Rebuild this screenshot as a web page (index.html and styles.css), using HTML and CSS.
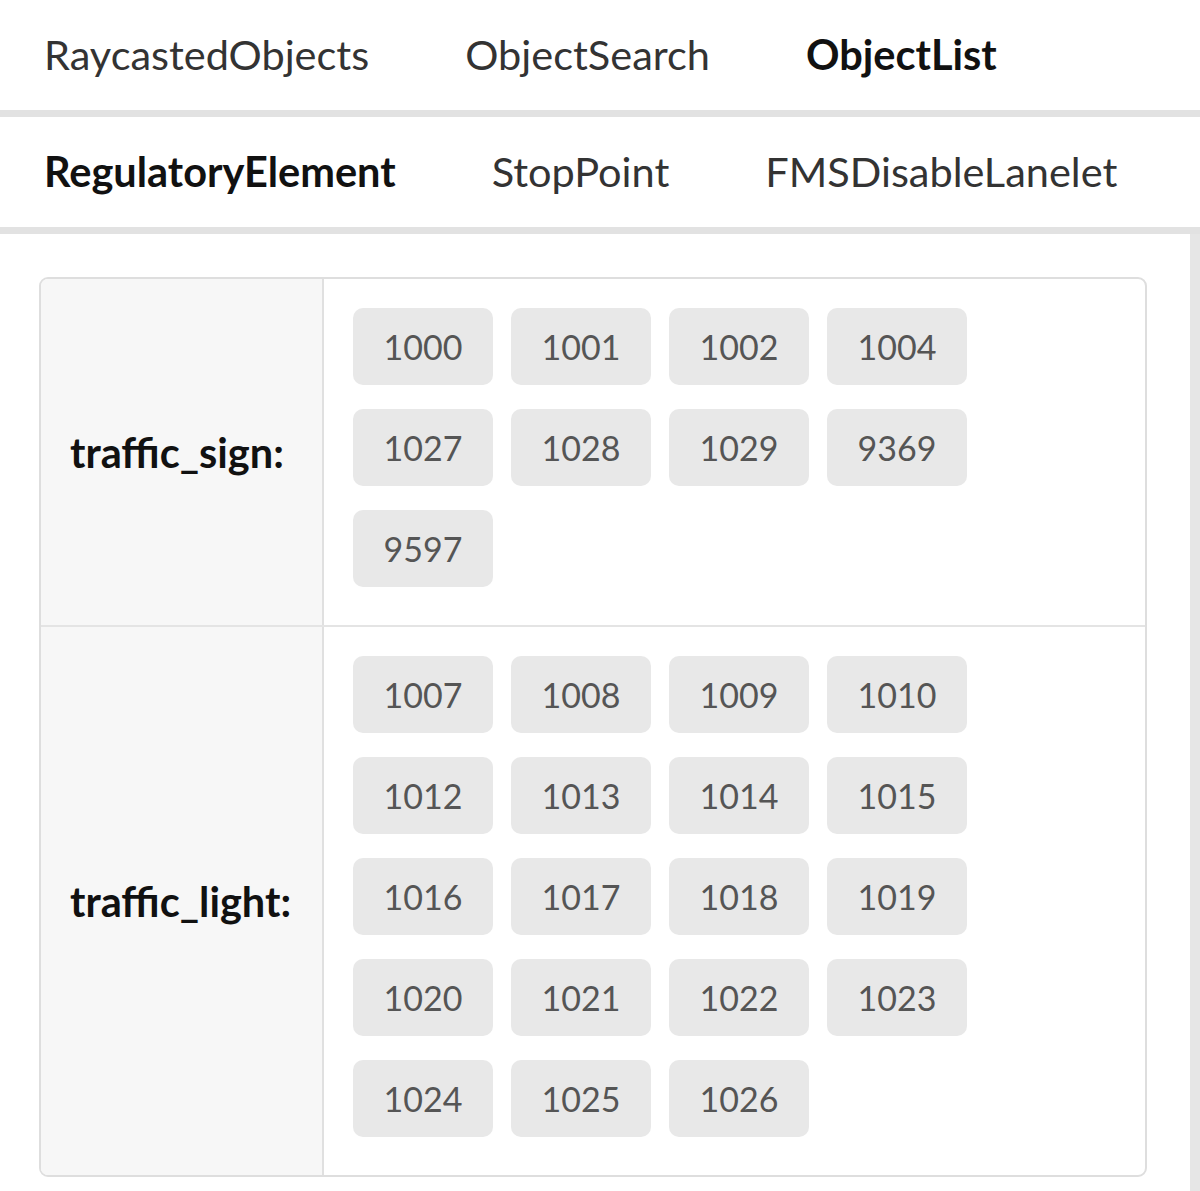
FILE: index.html
```html
<!DOCTYPE html>
<html lang="en">
<head>
    <meta charset="UTF-8">
    <meta name="viewport" content="width=device-width, initial-scale=1.0">
    <title>ObjectList</title>
    <link rel="stylesheet" href="styles.css">
</head>
<body>
    <div class="tabs">
        <div class="tab">RaycastedObjects</div>
        <div class="tab">ObjectSearch</div>
        <div class="tab active">ObjectList</div>
    </div>
    <div class="tabs">
        <div class="tab active">RegulatoryElement</div>
        <div class="tab">StopPoint</div>
        <div class="tab">FMSDisableLanelet</div>
    </div>
    <div class="page">
        <div class="content">
            <div class="object-table">
                <div class="table-row">
                    <div class="type-cell">traffic_sign:</div>
                    <div class="id-cell">
                        <span class="chip">1000</span>
                        <span class="chip">1001</span>
                        <span class="chip">1002</span>
                        <span class="chip">1004</span>
                        <span class="chip">1027</span>
                        <span class="chip">1028</span>
                        <span class="chip">1029</span>
                        <span class="chip">9369</span>
                        <span class="chip">9597</span>
                    </div>
                </div>
                <div class="table-row">
                    <div class="type-cell">traffic_light:</div>
                    <div class="id-cell">
                        <span class="chip">1007</span>
                        <span class="chip">1008</span>
                        <span class="chip">1009</span>
                        <span class="chip">1010</span>
                        <span class="chip">1012</span>
                        <span class="chip">1013</span>
                        <span class="chip">1014</span>
                        <span class="chip">1015</span>
                        <span class="chip">1016</span>
                        <span class="chip">1017</span>
                        <span class="chip">1018</span>
                        <span class="chip">1019</span>
                        <span class="chip">1020</span>
                        <span class="chip">1021</span>
                        <span class="chip">1022</span>
                        <span class="chip">1023</span>
                        <span class="chip">1024</span>
                        <span class="chip">1025</span>
                        <span class="chip">1026</span>
                    </div>
                </div>
            </div>
        </div>
        <div class="scroll-track"></div>
    </div>
</body>
</html>
```

FILE: styles.css
```css
html, body {
    height: 100%;
}
body {
    font-family: Lato, "Open Sans", sans-serif;
    margin: 0;
    padding: 0;
    background-color: #fff;
    color: #333;
    display: flex;
    flex-direction: column;
    overflow: hidden;
}
.tabs {
    display: flex;
    gap: 96px;
    align-items: center;
    height: 110px;
    padding-left: 44px;
    border-bottom: 7px solid #e2e2e2;
    flex-shrink: 0;
}
.tab {
    font-size: 41.5px;
    color: #333;
    white-space: nowrap;
    margin-top: -2px;
}
.tab.active {
    font-weight: bold;
    color: #111;
}
.page {
    flex: 1;
    display: flex;
}
.content {
    flex: 1;
    padding: 43px 43px 0 39px;
}
.scroll-track {
    width: 10px;
    background-color: #e6e6e6;
}
.object-table {
    border: 2px solid #dedede;
    border-radius: 9px;
    overflow: hidden;
}
.table-row {
    display: grid;
    grid-template-columns: 283px 1fr;
}
.table-row + .table-row {
    border-top: 2px solid #e4e4e4;
}
.type-cell {
    display: flex;
    align-items: center;
    padding-left: 29px;
    background-color: #f7f7f7;
    border-right: 2px solid #e0e0e0;
    font-size: 41.5px;
    font-weight: bold;
    color: #111;
}
.id-cell {
    display: flex;
    flex-wrap: wrap;
    align-content: flex-start;
    gap: 24px 18px;
    padding: 29px 29px 38px 29px;
    max-width: 650px;
}
.chip {
    display: flex;
    align-items: center;
    justify-content: center;
    width: 140px;
    height: 77px;
    background-color: #e8e8e8;
    border-radius: 10px;
    font-size: 34px;
    color: #555;
}
```
